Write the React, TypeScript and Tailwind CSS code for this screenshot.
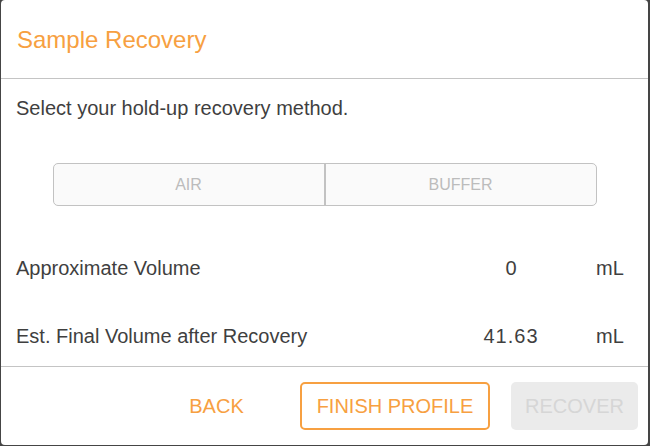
import React from "react";

export default function App() {
  const font = { fontFamily: '"Liberation Sans", Arial, sans-serif' };
  return (
    <div className="w-[650px] h-[446px] bg-[#454545] overflow-hidden" style={font}>
      <div className="ml-[1px] w-[647px] h-[445px] bg-white rounded-[4px] flex flex-col">
        <div className="h-[79px] border-b border-[#c4c4c4] flex items-center px-4 pt-[1px]">
          <span className="text-[24px] leading-[28px] text-[#f7a041]">Sample Recovery</span>
        </div>
        <div className="flex-1 flex flex-col">
          <div className="px-[15px] pt-[18px] text-[20px] leading-[23px] text-[#3f3f3f]">
            Select your hold-up recovery method.
          </div>
          <div className="mt-[43px] mx-auto w-[544px] h-[43px] flex border border-[#c2c2c2] rounded-[5px] bg-[#fafafa] overflow-hidden">
            <button className="flex-1 flex items-center justify-center text-[16px] text-[#bcbcbc] border-r-2 border-[#c2c2c2]">
              AIR
            </button>
            <button className="flex-1 flex items-center justify-center text-[16px] text-[#bcbcbc]">
              BUFFER
            </button>
          </div>
          <div className="mt-[48px] h-[28px] flex items-center text-[20px] text-[#3f3f3f]">
            <span className="flex-1 pl-[15px]">Approximate Volume</span>
            <span className="w-[80px] text-center mr-[45px]">0</span>
            <span className="w-[52px]">mL</span>
          </div>
          <div className="mt-[40px] h-[28px] flex items-center text-[20px] text-[#3f3f3f]">
            <span className="flex-1 pl-[15px]">Est. Final Volume after Recovery</span>
            <span className="w-[80px] text-center mr-[45px] tracking-[1px]">41.63</span>
            <span className="w-[52px]">mL</span>
          </div>
        </div>
        <div className="h-[79px] border-t border-[#c4c4c4] flex items-start justify-end pt-[15px]">
          <button className="w-[93px] h-[48px] mr-[37px] text-[20px] text-[#f7a041]">BACK</button>
          <button className="w-[190px] h-[48px] mr-[21px] text-[20px] text-[#f7a041] border-2 border-[#f7a041] rounded-[5px]">
            FINISH PROFILE
          </button>
          <button className="w-[127px] h-[48px] mr-[10px] text-[20px] text-[#d6d6d6] bg-[#ebebeb] rounded-[5px]">
            RECOVER
          </button>
        </div>
      </div>
    </div>
  );
}
